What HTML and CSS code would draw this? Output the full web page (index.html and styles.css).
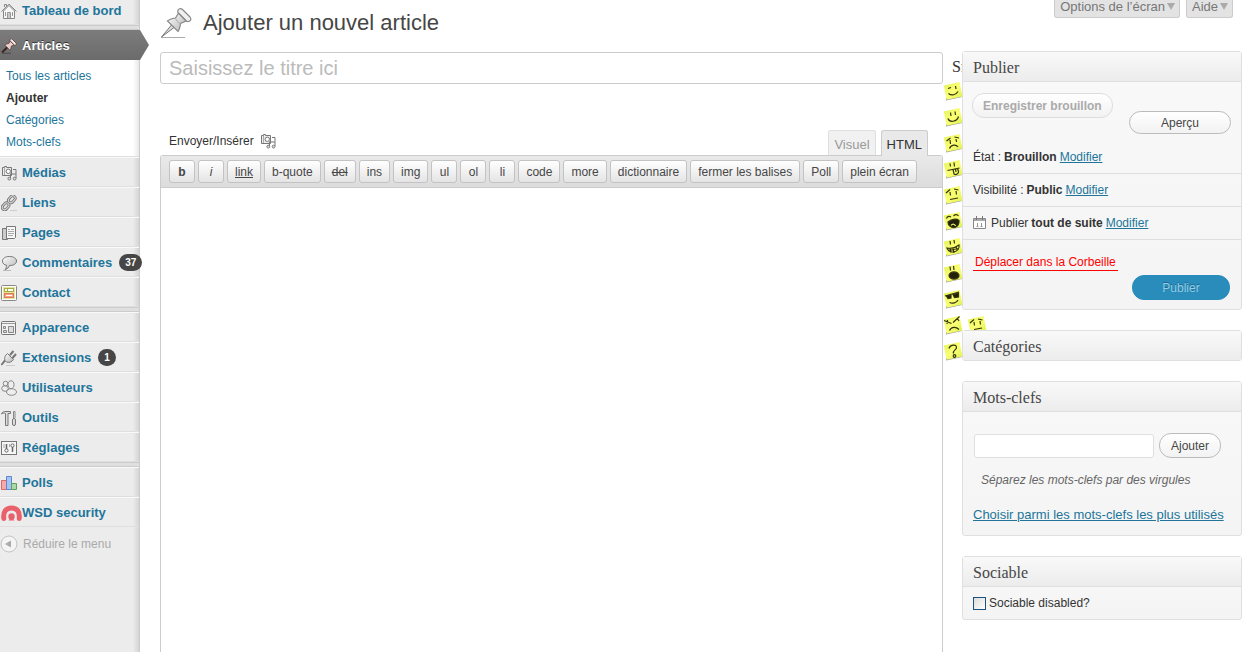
FILE: index.html
```html
<!DOCTYPE html>
<html lang="fr">
<head>
  <meta charset="UTF-8" />
  <meta name="viewport" content="width=device-width, initial-scale=1.0"/>
  <title>Ajouter un nouvel article</title>
  <link rel="stylesheet" href="styles.css">
</head>
<body>
  <!-- Shared shapes -->
  <svg class="defs" aria-hidden="true">
    <defs>
      <linearGradient id="paper" x1="0" y1="0" x2="1" y2="1">
        <stop offset="0" stop-color="#e2f25a"/>
        <stop offset="0.5" stop-color="#fbff74"/>
        <stop offset="1" stop-color="#dcee50"/>
      </linearGradient>
      <linearGradient id="metal" x1="0" y1="0" x2="1" y2="1">
        <stop offset="0" stop-color="#ffffff"/>
        <stop offset="1" stop-color="#b4b4b4"/>
      </linearGradient>
      <symbol id="note" viewBox="0 0 20 20">
        <path d="M3 19.5l16-3.5-1-2-15 3z" fill="#999"/>
        <path d="M0.8 4.6L16.6 1L19.4 15.4L3.6 18.8z" fill="url(#paper)"/>
      </symbol>
      <symbol id="media" viewBox="0 0 16 16">
        <g fill="none" stroke="#777">
          <path d="M1.5 2.5h2v-1h2v1h5v8h-9z" fill="#eee"/>
          <path d="M3.5 3v7" stroke="#aaa"/>
          <circle cx="7.3" cy="6.3" r="2.2" fill="#fff"/>
          <path d="M9.5 13.5v-5M12 4.5h3v8.5M10 9h5" fill="none"/>
          <circle cx="8.3" cy="13.6" r="1.4" fill="#ddd"/>
          <circle cx="13.6" cy="13.6" r="1.4" fill="#ddd"/>
        </g>
      </symbol>
    </defs>
  </svg>

  <div class="wrap">
    <nav class="sidebar">
      <ul class="menu">
        <li class="menu-first">
          <a class="menu-link" href="#">
            <svg class="menu-icon" viewBox="0 0 16 16"><path d="M2.5 8v7.500h11V8L8 2.500z" fill="#f6f6f6" stroke="#888"/><path d="M0.500 8.500L8 1.200l7.500 7.300M3.500 4V1.500h2V3" fill="none" stroke="#888"/><path d="M6.500 15V9.500h3V15M4.500 9v4M11.500 9v4M8 10v5" fill="none" stroke="#999"/></svg>
            Tableau de bord
          </a>
        </li>
        <li class="separator"></li>
        <li>
          <a class="menu-link current" href="#">
            <svg class="menu-icon" viewBox="0 0 32 32"><path d="M2 29L13 18" stroke="#3d2220" stroke-width="4"/><path d="M2 30.500h18" stroke="#4a4a4a" stroke-width="2"/><path d="M18.500 6L15.500 11c-3 .5-6 1-8 3L18 24.500c2-2 2-5 2.500-8L26 14z" fill="#eccfcc" stroke="#4e3533" stroke-width="1.500"/><path d="M18 5.500c-1-3 2-5 4.500-3l7.500 7.500c2 2.500 0 5-3 4.500z" fill="#f8e4e2" stroke="#4e3533" stroke-width="1.500"/></svg>
            Articles
          </a>
          <ul class="submenu">
            <li><a href="#">Tous les articles</a></li>
            <li><a class="active" href="#">Ajouter</a></li>
            <li><a href="#">Catégories</a></li>
            <li><a href="#">Mots-clefs</a></li>
          </ul>
        </li>
        <li>
          <a class="menu-link" href="#">
            <svg class="menu-icon"><use href="#media"/></svg>
            Médias
          </a>
        </li>
        <li>
          <a class="menu-link" href="#">
            <svg class="menu-icon" viewBox="0 0 16 16"><g fill="none"><rect x="-3.800" y="-2.400" width="7.600" height="4.800" rx="2.400" transform="translate(10.800 4.300) rotate(-48)" stroke="#777" stroke-width="2.800"/><rect x="-3.800" y="-2.400" width="7.600" height="4.800" rx="2.400" transform="translate(4.600 11.300) rotate(-48)" stroke="#777" stroke-width="2.800"/><rect x="-3.800" y="-2.400" width="7.600" height="4.800" rx="2.400" transform="translate(10.800 4.300) rotate(-48)" stroke="#ddd"/><rect x="-3.800" y="-2.400" width="7.600" height="4.800" rx="2.400" transform="translate(4.600 11.300) rotate(-48)" stroke="#ddd"/><path d="M9 15.500h7" stroke="#ccc"/></g></svg>
            Liens
          </a>
        </li>
        <li>
          <a class="menu-link" href="#">
            <svg class="menu-icon" viewBox="0 0 16 16"><path d="M1.500 3.500h5v11h-5z" fill="#ccc" stroke="#777"/><path d="M5.500 1.500h9v11l-1 1h-8z" fill="#f8f8f8" stroke="#777"/><path d="M7 4.500h2M10 4.500h3M7 6.500h6M7 8.500h6M7 10.500h5" stroke="#aaa"/></svg>
            Pages
          </a>
        </li>
        <li>
          <a class="menu-link" href="#">
            <svg class="menu-icon" viewBox="0 0 16 16"><path d="M8.500 1.500C4 1.500 1.500 3.500 1.500 6s1.700 3.800 4 4.300c0 2-.5 3.200-1.500 4.200 2.500-.6 3.800-2 4.500-4 4.300 0 7-1.700 7-4.500s-3-4.500-7-4.500z" fill="url(#metal)" stroke="#777"/><path d="M2 15.500h8" stroke="#bbb"/></svg>
            Commentaires <span class="count">37</span>
          </a>
        </li>
        <li>
          <a class="menu-link" href="#">
            <svg class="menu-icon" viewBox="0 0 16 16"><rect x=".5" y=".5" width="15" height="15" rx="1" fill="#fff" stroke="#888"/><rect x="2" y="2" width="12" height="12" fill="#e4e69a"/><rect x="3.500" y="3.500" width="9" height="3" fill="#fff" stroke="#a3ae3c"/><path d="M6.500 3.500v3" stroke="#a3ae3c"/><rect x="3.500" y="8.500" width="9" height="4" fill="#f5a382" stroke="#d97e5f"/><path d="M5 10.500h6" stroke="#fff"/></svg>
            Contact
          </a>
        </li>
        <li class="separator"></li>
        <li>
          <a class="menu-link" href="#">
            <svg class="menu-icon" viewBox="0 0 16 16"><rect x=".5" y="1.500" width="14" height="13" rx="1" fill="#f2f2f2" stroke="#777"/><path d="M1 3.500h13" stroke="#999"/><path d="M2.500 6.500h2v2h-2zM2.500 10.500h3v2h-3zM7.500 6.500h5v6h-5z" fill="#ddd" stroke="#888"/></svg>
            Apparence
          </a>
        </li>
        <li>
          <a class="menu-link" href="#">
            <svg class="menu-icon" viewBox="0 0 16 16"><path d="M0 14.500c2.500 0 2-3.500 4.500-4" fill="none" stroke="#777" stroke-width="2"/><path d="M9 5l3.500-4M11.500 8L15 4" stroke="#777" stroke-width="2"/><path d="M6.500 3.500l6 6c-1.500 2.500-4.500 3.500-7 2.500l-1.500-1.500C3 8 4.300 5 6.500 3.500z" fill="url(#metal)" stroke="#777"/><path d="M5 15.500h9" stroke="#ccc"/></svg>
            Extensions <span class="count">1</span>
          </a>
        </li>
        <li>
          <a class="menu-link" href="#">
            <svg class="menu-icon" viewBox="0 0 16 16"><g fill="#eee" stroke="#888"><ellipse cx="4" cy="8.500" rx="3.300" ry="2.800"/><circle cx="4.500" cy="3.500" r="2.300"/><ellipse cx="10.500" cy="12" rx="5" ry="3.300"/><path d="M7 4.500c0-2.500 1.300-3.700 3-3.700s3 1.500 3 3.700-1 4.200-3 4.200-3-2-3-4.200z"/></g></svg>
            Utilisateurs
          </a>
        </li>
        <li>
          <a class="menu-link" href="#">
            <svg class="menu-icon" viewBox="0 0 16 16"><path d="M.5 4C1.500 1.500 3 1.500 5 1.500h4.500v2H7v12H4.500v-12C3 3 2 3 .5 4z" fill="#ddd" stroke="#777"/><path d="M12.500 8V1.500h1.500V8" fill="#eee" stroke="#888"/><rect x="11.500" y="8.500" width="3" height="7" rx="1.500" fill="#ddd" stroke="#777"/></svg>
            Outils
          </a>
        </li>
        <li>
          <a class="menu-link" href="#">
            <svg class="menu-icon" viewBox="0 0 16 16"><rect x=".5" y="1.500" width="15" height="13" fill="#f6f6f6" stroke="#777"/><path d="M5.500 4v5M11.500 7v5" stroke="#666" stroke-width="1.500"/><circle cx="5.500" cy="10.500" r="1.600" fill="#fff" stroke="#666"/><circle cx="11.500" cy="5.500" r="1.600" fill="#fff" stroke="#666"/><path d="M3 4v4M8.500 4v3" stroke="#aaa"/></svg>
            Réglages
          </a>
        </li>
        <li class="separator"></li>
        <li>
          <a class="menu-link" href="#">
            <svg class="menu-icon" viewBox="0 0 16 16"><path d="M.5 5.500h5v9h-5z" fill="#f8a9a9" stroke="#d96a6a"/><path d="M5.500 1.500h5v13h-5z" fill="#a5c4f5" stroke="#5f86cf"/><path d="M10.500 8.500h5v6h-5z" fill="#abd8a8" stroke="#5f9f5c"/></svg>
            Polls
          </a>
        </li>
        <li>
          <a class="menu-link" href="#">
            <svg class="menu-icon wide" viewBox="0 0 21 16"><path d="M2.800 13.500C2 6.500 5 3 10.500 3S19 6.500 18.200 13.500" fill="none" stroke="#e8616b" stroke-width="5" stroke-linecap="round"/><circle cx="10.500" cy="11.500" r="3.200" fill="#e8616b"/><path d="M7.500 15.500l3-4 3 4z" fill="#e8616b"/></svg>
            WSD security
          </a>
        </li>
      </ul>
      <button class="collapse" type="button">
        <svg class="collapse-icon" viewBox="0 0 18 18"><circle cx="9" cy="9" r="8" fill="#f4f4f4" stroke="#c4c4c4"/><path d="M5 9l6-3.500v7z" fill="#aaa"/></svg>
        Réduire le menu
      </button>
    </nav>

    <main class="content">
      <header class="page-header">
        <svg class="page-icon" viewBox="0 0 32 32"><path d="M1 30.500h24" stroke="#aaa"/><path d="M1.500 30L11.500 18l2.500 2.500z" fill="#ddd" stroke="#777"/><path d="M18.500 6L15.500 11c-3 .5-6 1-8 3L18 24.500c2-2 2-5 2.500-8L26 14z" fill="url(#metal)" stroke="#888" stroke-width="1.200"/><path d="M18 5.500c-1-3 2-5 4.500-3l7.500 7.500c2 2.500 0 5-3 4.500z" fill="#f1f1f1" stroke="#888" stroke-width="1.200"/><path d="M15.500 11c.5 2.500 2.500 4.500 5 5.500" fill="none" stroke="#aaa"/></svg>
        <h1>Ajouter un nouvel article</h1>
        <div class="screen-meta">
          <button type="button">Options de l’écran <span class="arrow"></span></button>
          <button type="button">Aide <span class="arrow"></span></button>
        </div>
      </header>

      <div class="columns">
        <section class="post-body">
          <input class="title-input" type="text" aria-label="Titre" placeholder="Saisissez le titre ici">
          <div class="editor-tools">
            <a class="add-media" href="#">Envoyer/Insérer <svg class="media-icon"><use href="#media"/></svg></a>
            <div class="tabs">
              <button class="tab" type="button">Visuel</button>
              <button class="tab selected" type="button">HTML</button>
            </div>
          </div>
          <div class="editor">
            <div class="quicktags">
              <button type="button"><b>b</b></button>
              <button type="button"><i>i</i></button>
              <button type="button"><u>link</u></button>
              <button type="button">b-quote</button>
              <button type="button"><del>del</del></button>
              <button type="button">ins</button>
              <button type="button">img</button>
              <button type="button">ul</button>
              <button type="button">ol</button>
              <button type="button">li</button>
              <button type="button">code</button>
              <button type="button">more</button>
              <button type="button">dictionnaire</button>
              <button type="button">fermer les balises</button>
              <button type="button">Poll</button>
              <button type="button">plein écran</button>
            </div>
            <textarea aria-label="Contenu"></textarea>
          </div>
        </section>

        <section class="smileys">
          <h3>Smileys</h3>
          <ul>
            <li><a href="#"><svg class="smiley" viewBox="0 0 20 20"><use href="#note"/><path d="M5 7.500l3-1M12.500 5l.5 3M5.500 12.500c3 2.500 7.500 1.500 9.500-2"/></svg></a></li>
            <li><a href="#"><svg class="smiley" viewBox="0 0 20 20"><use href="#note"/><path d="M7.500 5.500l.5 3.500M12 4.500l.5 3.500M5 11.500c1.500 4.500 9 3.500 10.500-2"/></svg></a></li>
            <li><a href="#"><svg class="smiley" viewBox="0 0 20 20"><use href="#note"/><path d="M3.500 8l4-3M11.500 4l4.500 1M7 7l.5 4M13 6l.5 3M6.500 15.500c1.500-4 6.500-4.500 8.500-1.500"/></svg></a></li>
            <li><a href="#"><svg class="smiley" viewBox="0 0 20 20"><use href="#note"/><path d="M7 4.500l.5 3M11 3.500l.5 4M4.500 11.500l12-2.500M10 10.500l1 4.500c2 1.500 5-.5 4.500-2.500l-1-3M12.500 10l.5 3"/></svg></a></li>
            <li><a href="#"><svg class="smiley" viewBox="0 0 20 20"><use href="#note"/><path d="M3 8l4-3.500M11 4l4.500 1M7 7l.5 3.500M13 6l.5 3.500M7 14.500l8-1.500"/></svg></a></li>
            <li><a href="#"><svg class="smiley" viewBox="0 0 20 20"><use href="#note"/><path d="M3.500 7.500c1-2.500 3-2.500 4.500-1.500M10.500 5c2-2 4-1.500 5 0"/><path class="ink" d="M5 11c3-2.500 8-4 11-1.500.5 4-2 7-5 7s-6-2-6-5.500z"/><path class="paper" d="M8 14.500c1.500-2 4-1.500 4.500.5"/></svg></a></li>
            <li><a href="#"><svg class="smiley" viewBox="0 0 20 20"><use href="#note"/><path d="M7 4l.5 3.500M11 3l.5 3.500M4 11c4 1 8 0 12-3 1.500 7-9.500 10-12 3zM7 11.500l1 4M10 11l1 5M13 9.500l1 4.500M5.500 13.500l10-2"/></svg></a></li>
            <li><a href="#"><svg class="smiley" viewBox="0 0 20 20"><use href="#note"/><path d="M7 3.500l.5 4M10.500 3l.5 4"/><ellipse class="ink" cx="11" cy="12.500" rx="5" ry="3.600"/></svg></a></li>
            <li><a href="#"><svg class="smiley" viewBox="0 0 20 20"><use href="#note"/><path d="M2 7l14-4"/><path class="ink" d="M3.500 7l4.500-1v3l-3 .5zM10 5.500l5.500-1.500v4l-4 .5z"/><path d="M6.500 13.500c3 1.500 7 .5 8.500-2.500"/></svg></a></li>
            <li>
              <a href="#"><svg class="smiley" viewBox="0 0 20 20"><use href="#note"/><path d="M1 5.500l7.500 3M10 7.500l6.500-6M4.500 5l-.5 4M14 3l2 3M6.500 15.500c2-4 6.500-4 9.500-1"/></svg></a>
              <a href="#"><svg class="smiley" viewBox="0 0 20 20"><use href="#note"/><path d="M3 8l4-3.500M11 4l4.500 1M7 7l.5 3.500M13 6l.5 3.500M7 14.500l8-1.500"/></svg></a>
            </li>
            <li><a href="#"><svg class="smiley" viewBox="0 0 20 20"><use href="#note"/><path d="M6 7.500c1-4 7-4.500 7.500-1.500s-4 3-3 6.500"/><circle cx="11.500" cy="15" r="1.300"/></svg></a></li>
          </ul>
        </section>

        <aside class="side">
          <section class="postbox">
            <h3>Publier</h3>
            <div class="save-row">
              <button class="button draft" type="button" disabled>Enregistrer brouillon</button>
              <button class="button preview" type="button">Aperçu</button>
            </div>
            <p class="misc-row">État : <b>Brouillon</b> <a href="#">Modifier</a></p>
            <p class="misc-row">Visibilité : <b>Public</b> <a href="#">Modifier</a></p>
            <p class="misc-row">
              <svg class="calendar" viewBox="0 0 14 14"><path d="M.5 2.500h12v10H.5z" fill="#fff" stroke="#888"/><path d="M1 4h11" stroke="#aaa" stroke-width="2"/><path d="M3.500 0v4M9.500 0v4" stroke="#777"/><path d="M4.500 7v4M8.500 7v4M3.500 10.500h2M7.500 10.500h2" stroke="#999"/></svg>
              Publier <b>tout de suite</b> <a href="#">Modifier</a>
            </p>
            <div class="publish-row">
              <a class="trash" href="#">Déplacer dans la Corbeille</a>
              <button class="button primary" type="button">Publier</button>
            </div>
          </section>

          <section class="postbox">
            <h3>Catégories</h3>
          </section>

          <section class="postbox">
            <h3>Mots-clefs</h3>
            <div class="tags">
              <div class="tag-row">
                <input type="text" aria-label="Mots-clefs">
                <button class="button" type="button">Ajouter</button>
              </div>
              <p class="hint">Séparez les mots-clefs par des virgules</p>
              <a class="tag-cloud" href="#">Choisir parmi les mots-clefs les plus utilisés</a>
            </div>
          </section>

          <section class="postbox">
            <h3>Sociable</h3>
            <label class="check"><input type="checkbox"> Sociable disabled?</label>
          </section>
        </aside>
      </div>
    </main>
  </div>
</body>
</html>
```

FILE: styles.css
```css
* {
  margin: 0;
  padding: 0;
  box-sizing: border-box;
}

body {
  font-family: "Liberation Sans", Arial, sans-serif;
  font-size: 12px;
  line-height: 16px;
  color: #333;
  background: #fff;
}

ul {
  list-style: none;
}

a {
  color: #21759b;
}

button,
input,
textarea {
  font-family: inherit;
  font-size: 12px;
  color: #333;
}

button {
  cursor: pointer;
}

svg {
  display: block;
  flex-shrink: 0;
}

.defs {
  position: absolute;
  width: 0;
  height: 0;
}

.wrap {
  display: flex;
  min-height: 100vh;
}

/* Admin menu */
.sidebar {
  width: 140px;
  flex-shrink: 0;
  background: linear-gradient(to left, #d4d4d4, #ececec 6px);
  border-right: 1px solid #ccc;
}

.menu-link {
  display: flex;
  align-items: center;
  height: 30px;
  padding: 1px 0 0 1px;
  font-size: 13px;
  font-weight: bold;
  color: #21759b;
  text-decoration: none;
  white-space: nowrap;
  border-top: 1px solid #f9f9f9;
  border-bottom: 1px solid #dfdfdf;
}

.menu-first .menu-link {
  height: 25px;
  padding-bottom: 4px;
  border-top: none;
}

.menu-icon {
  width: 16px;
  height: 16px;
  margin-right: 5px;
}

.menu-icon.wide {
  width: 21px;
  margin-right: 0;
}

.separator {
  height: 5px;
  background: #dfdfdf;
  border-top: 1px solid #ccc;
  border-bottom: 1px solid #ccc;
}

.menu-link.current {
  width: 149px;
  position: relative;
  color: #fff;
  text-shadow: 0 -1px 0 #333;
  background: linear-gradient(#7c7c7c, #6b6b6b);
  border: none;
  clip-path: polygon(0 0, 140px 0, 100% 50%, 140px 100%, 0 100%);
}

.submenu {
  padding: 5px 0 3px 6px;
  background: linear-gradient(to left, #e8e8e8, #fff 6px);
  border-bottom: 1px solid #dfdfdf;
}

.submenu a {
  display: block;
  line-height: 22px;
  text-decoration: none;
}

.submenu .active {
  color: #333;
  font-weight: bold;
}

.count {
  position: relative;
  flex-shrink: 0;
  margin-left: 7px;
  padding: 0 6px;
  border-radius: 9px;
  font-size: 10px;
  line-height: 17px;
  text-align: center;
  color: #fff;
  background: #464646;
}

.collapse {
  display: flex;
  align-items: center;
  gap: 5px;
  height: 34px;
  border: none;
  background: none;
  color: #aaa;
}

.collapse-icon {
  width: 18px;
  height: 18px;
}

/* Page */
.content {
  flex: 1;
  min-width: 0;
  display: flex;
  flex-direction: column;
  padding: 0 11px 0 20px;
}

.page-header {
  display: flex;
  align-items: flex-start;
  height: 51px;
}

.page-icon {
  width: 32px;
  height: 32px;
  margin-top: 7px;
}

.page-header h1 {
  margin-left: 11px;
  font-size: 22px;
  font-weight: normal;
  line-height: 46px;
  color: #464646;
}

.screen-meta {
  display: flex;
  gap: 6px;
  margin-left: auto;
  padding-right: 9px;
}

.screen-meta button {
  display: flex;
  align-items: center;
  gap: 2px;
  height: 18px;
  padding: 0 4px 4px 5px;
  border: 1px solid #ccc;
  border-top: none;
  border-radius: 0 0 3px 3px;
  font-size: 13px;
  line-height: 14px;
  color: #777;
  background: #e3e3e3;
}

.arrow {
  border: 4px solid transparent;
  border-top: 7px solid #aaa;
  border-bottom: none;
}

.columns {
  flex: 1;
  display: grid;
  grid-template-columns: minmax(0, 1fr) 19px 280px;
}

/* Editor */
.post-body {
  display: flex;
  flex-direction: column;
  padding-top: 1px;
}

.title-input {
  width: 100%;
  height: 32px;
  padding: 0 8px;
  border: 1px solid #ccc;
  border-radius: 3px;
  font-size: 20px;
}

.title-input::placeholder {
  color: #bbb;
}

.editor-tools {
  display: flex;
  justify-content: space-between;
  align-items: flex-end;
  height: 71px;
  padding: 0 15px 0 9px;
}

.add-media {
  display: flex;
  align-items: center;
  gap: 6px;
  padding-bottom: 6px;
  color: #333;
  text-decoration: none;
}

.media-icon {
  width: 16px;
  height: 16px;
}

.tabs {
  display: flex;
  align-items: flex-end;
  gap: 5px;
}

.tab {
  height: 25px;
  padding: 2px 5px 0;
  border: 1px solid #dfdfdf;
  border-bottom: none;
  border-radius: 3px 3px 0 0;
  font-size: 13px;
  color: #999;
  background: #f1f1f1;
}

.tab.selected {
  position: relative;
  height: 26px;
  margin-bottom: -1px;
  border-color: #ccc;
  color: #333;
  background: #e9e9e9;
}

.editor {
  flex: 1;
  display: flex;
  flex-direction: column;
  border: 1px solid #ccc;
  border-bottom: none;
  border-radius: 3px 3px 0 0;
}

.quicktags {
  display: flex;
  flex-wrap: wrap;
  gap: 3px;
  padding: 4px 8px;
  border-bottom: 1px solid #ccc;
  background: linear-gradient(#e9e9e9, #dcdcdc);
}

.quicktags button {
  min-width: 26px;
  height: 23px;
  padding: 0 7px;
  border: 1px solid #c3c3c3;
  border-radius: 3px;
  color: #464646;
  background: linear-gradient(#fff, #e4e4e4);
}

.editor textarea {
  flex: 1;
  width: 100%;
  padding: 10px;
  border: none;
  outline: none;
  resize: none;
}

/* Smileys */
.smileys h3 {
  height: 27px;
  padding: 2px 0 0 9px;
  overflow: hidden;
  font-family: "Liberation Serif", Georgia, serif;
  font-size: 16px;
  font-weight: normal;
  line-height: 27px;
}

.smileys li {
  display: flex;
  align-items: center;
  gap: 4px;
  height: 26px;
}

.smiley {
  width: 20px;
  height: 20px;
  fill: none;
  stroke: #33330c;
  stroke-width: 1.2px;
}

.smiley use {
  stroke: none;
}

.smiley .ink {
  fill: #22220c;
}

.smiley .paper {
  stroke: #eef56a;
}

/* Meta boxes */
.side {
  position: relative;
  display: flex;
  flex-direction: column;
  gap: 20px;
  align-self: start;
}

.postbox {
  border: 1px solid #dfdfdf;
  border-radius: 3px;
  background: linear-gradient(#f9f9f9, #f4f4f4);
}

.postbox h3 {
  height: 30px;
  padding: 0 10px;
  border-bottom: 1px solid #dfdfdf;
  font-family: "Liberation Serif", Georgia, serif;
  font-size: 16px;
  font-weight: normal;
  line-height: 32px;
  color: #464646;
  background: linear-gradient(#f9f9f9, #ececec);
}

.postbox h3:last-child {
  height: 29px;
  border-bottom: none;
}

.button {
  height: 25px;
  padding: 0 11px;
  border: 1px solid #bbb;
  border-radius: 12px;
  color: #464646;
  background: linear-gradient(#fff, #f2f2f2);
}

.save-row {
  display: flex;
  justify-content: space-between;
  align-items: flex-end;
  height: 52px;
  padding: 0 10px 0 9px;
}

.draft {
  align-self: flex-start;
  margin-top: 11px;
  padding: 0 10px;
  border-color: #ddd;
  font-weight: bold;
  color: #aaa;
}

.preview {
  width: 102px;
  height: 23px;
}

.misc-row {
  display: flex;
  align-items: center;
  gap: 3px;
  height: 33px;
  padding: 0 10px;
  border-bottom: 1px solid #dfdfdf;
}

.save-row + .misc-row {
  height: 40px;
  padding-top: 6px;
}

.calendar {
  width: 14px;
  height: 14px;
  margin-right: 1px;
}

.publish-row {
  display: flex;
  flex-direction: column;
  align-items: flex-start;
  gap: 4px;
  padding: 14px 11px 9px 10px;
}

.trash {
  padding: 0 2px;
  border-bottom: 1px solid #f00;
  color: #f00;
  text-decoration: none;
}

.primary {
  align-self: flex-end;
  width: 98px;
  border-color: #298cba;
  color: #94cde7;
  text-shadow: 0 -1px 0 #1d6a90;
  background: #298cba;
}

.tags {
  padding: 21px 10px 12px;
}

.tag-row {
  display: flex;
  align-items: center;
  gap: 5px;
}

.tag-row input {
  width: 180px;
  height: 24px;
  margin-left: 1px;
  padding: 0 4px;
  border: 1px solid #dfdfdf;
  border-radius: 3px;
  background: #fff;
}

.hint {
  padding: 14px 8px 19px;
  font-style: italic;
  color: #666;
}

.tag-cloud {
  font-size: 13px;
}

.check {
  display: flex;
  align-items: center;
  gap: 3px;
  height: 32px;
  padding: 0 10px;
}

.check input {
  appearance: none;
  width: 13px;
  height: 13px;
  border: 1px solid #1c5180;
  background: linear-gradient(135deg, #dcdcd7, #fff);
}

.check input:checked {
  background: #1c5180;
}
```
